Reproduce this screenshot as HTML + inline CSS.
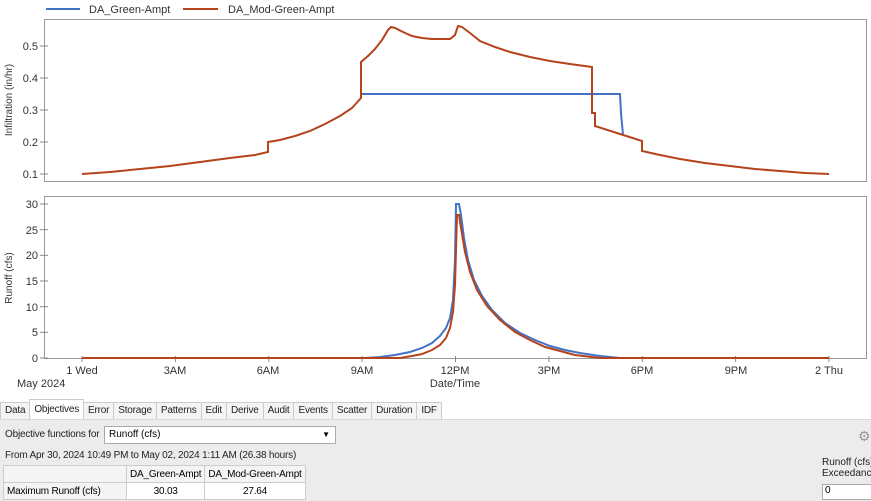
<!DOCTYPE html>
<html><head><style>
body{margin:0;width:871px;height:500px;overflow:hidden;background:#fff;font-family:"Liberation Sans",sans-serif;position:relative}
.a{position:absolute;font-size:10px;color:#222;white-space:nowrap}
.tabs{position:absolute;left:0;top:402px;height:18px;display:flex}
.tab{font-size:10px;letter-spacing:-0.2px;padding:2px 4px 0;border:1px solid #ccc;border-bottom:none;background:#f4f4f4;height:15px;margin-right:-1px;color:#222}
.tab.sel{background:#fff;height:17px;margin-top:-3px;padding-top:4px}
.panel{position:absolute;left:0;top:419px;width:871px;height:81px;background:#ececec;border-top:1px solid #d8d8d8}
table{border-collapse:collapse;position:absolute;left:3px;top:465px;font-size:10px;letter-spacing:-0.2px}
td{border:1px solid #ccc;height:16px;padding:0 3px}
</style></head><body>
<svg width="871" height="400" style="position:absolute;left:0;top:0" font-family="Liberation Sans" font-size="11" fill="#333">
<line x1="46" y1="9" x2="80" y2="9" stroke="#4472c4" stroke-width="2"/>
<text x="89" y="13">DA_Green-Ampt</text>
<line x1="183" y1="9" x2="218" y2="9" stroke="#b5431c" stroke-width="2"/>
<text x="228" y="13">DA_Mod-Green-Ampt</text>
<rect x="44.5" y="19.5" width="822" height="162" fill="none" stroke="#999"/>
<rect x="44.5" y="196.5" width="822" height="162" fill="none" stroke="#999"/>
<g stroke="#888">
<line x1="40" y1="46" x2="48" y2="46"/><line x1="40" y1="78" x2="48" y2="78"/><line x1="40" y1="110" x2="48" y2="110"/><line x1="40" y1="142" x2="48" y2="142"/><line x1="40" y1="174" x2="48" y2="174"/>
<line x1="40" y1="204" x2="48" y2="204"/><line x1="40" y1="229.7" x2="48" y2="229.7"/><line x1="40" y1="255.3" x2="48" y2="255.3"/><line x1="40" y1="281" x2="48" y2="281"/><line x1="40" y1="306.7" x2="48" y2="306.7"/><line x1="40" y1="332.3" x2="48" y2="332.3"/><line x1="40" y1="358" x2="48" y2="358"/>
<line x1="82" y1="356" x2="82" y2="362"/><line x1="175.4" y1="356" x2="175.4" y2="362"/><line x1="268.8" y1="356" x2="268.8" y2="362"/><line x1="362" y1="356" x2="362" y2="362"/><line x1="455.5" y1="356" x2="455.5" y2="362"/><line x1="549" y1="356" x2="549" y2="362"/><line x1="642.3" y1="356" x2="642.3" y2="362"/><line x1="735.6" y1="356" x2="735.6" y2="362"/><line x1="829" y1="356" x2="829" y2="362"/>
</g>
<g text-anchor="end"><text x="38" y="50">0.5</text><text x="38" y="82">0.4</text><text x="38" y="114">0.3</text><text x="38" y="146">0.2</text><text x="38" y="178">0.1</text>
<text x="38" y="208">30</text><text x="38" y="234">25</text><text x="38" y="259">20</text><text x="38" y="285">15</text><text x="38" y="311">10</text><text x="38" y="336">5</text><text x="38" y="362">0</text></g>
<text transform="translate(12,100) rotate(-90)" text-anchor="middle" font-size="10">Infiltration (in/hr)</text>
<text transform="translate(12,278) rotate(-90)" text-anchor="middle" font-size="10">Runoff (cfs)</text>
<g text-anchor="middle"><text x="82" y="374">1 Wed</text><text x="175" y="374">3AM</text><text x="268" y="374">6AM</text><text x="362" y="374">9AM</text><text x="455" y="374">12PM</text><text x="549" y="374">3PM</text><text x="642" y="374">6PM</text><text x="736" y="374">9PM</text><text x="829" y="374">2 Thu</text>
<text x="455" y="387">Date/Time</text></g>
<text x="17" y="387">May 2024</text>
<polyline fill="none" stroke="#4472c4" stroke-width="2" points="361,94 620,94 621,113 623,135"/>
<polyline fill="none" stroke="#b5431c" stroke-width="2" points="82,174 110,172 140,169 170,166 200,162 230,158 255,155 268,152 268,142 280,140 295,136 310,131 325,124 340,116 352,108 361,98 361,62 368,56 375,49 382,40 388,30 391,27 395,28 403,32 412,36 422,38 432,39 450,39 455,35 458,26 462,27 470,33 480,41 495,47 510,52 530,57 550,61 570,64 592,67 592,113 595,113 595,126 620,134 642,141 642,151 660,155 680,159 705,163 730,166 755,169 780,171 805,173 829,174"/>
<polyline fill="none" stroke="#4472c4" stroke-width="2" points="82,358 365,358 380,357 395,355 410,352 422,348 432,343 440,336 446,328 450,318 453,300 455,260 456,204 459,204 461,215 464,238 468,260 474,280 482,296 492,310 505,323 520,333 535,340 550,346 565,350 580,353 600,356 620,358"/>
<polyline fill="none" stroke="#b5431c" stroke-width="2" points="82,358 400,358 412,356 422,354 432,350 440,345 446,338 450,328 453,312 455,285 457,215 459,215 461,228 465,252 470,272 477,290 487,306 500,320 515,332 530,340 545,347 560,351 575,355 600,358 829,358"/>
</svg>
<div class="tabs"><div class="tab">Data</div><div class="tab sel">Objectives</div><div class="tab">Error</div><div class="tab">Storage</div><div class="tab">Patterns</div><div class="tab">Edit</div><div class="tab">Derive</div><div class="tab">Audit</div><div class="tab">Events</div><div class="tab">Scatter</div><div class="tab">Duration</div><div class="tab">IDF</div></div>
<div class="panel"></div>
<div class="a" style="left:5px;top:429px;letter-spacing:-0.2px">Objective functions for</div>
<div style="position:absolute;left:104px;top:426px;width:226px;height:16px;background:#fff;border:1px solid #aaa;font-size:10px;padding-left:4px;line-height:16px">Runoff (cfs)<span style="position:absolute;right:5px;top:0;font-size:8px">▼</span></div>
<div class="a" style="left:5px;top:450px;letter-spacing:-0.2px">From Apr 30, 2024 10:49 PM to May 02, 2024 1:11 AM (26.38 hours)</div>
<table><tr><td style="width:116px;background:#f4f4f4"></td><td style="text-align:center;background:#f4f4f4">DA_Green-Ampt</td><td style="text-align:center;background:#f4f4f4">DA_Mod-Green-Ampt</td></tr>
<tr><td style="background:#f4f4f4">Maximum Runoff (cfs)</td><td style="text-align:center;background:#fff">30.03</td><td style="text-align:center;background:#fff">27.64</td></tr></table>
<div class="a" style="left:858px;top:428px;color:#999;font-size:14px">⚙</div>
<div class="a" style="left:822px;top:457px;line-height:11px">Runoff (cfs)<br>Exceedance</div>
<div style="position:absolute;left:822px;top:484px;width:50px;height:14px;background:#fff;border:1px solid #aaa;font-size:10px;padding-left:2px">0</div>
</body></html>
